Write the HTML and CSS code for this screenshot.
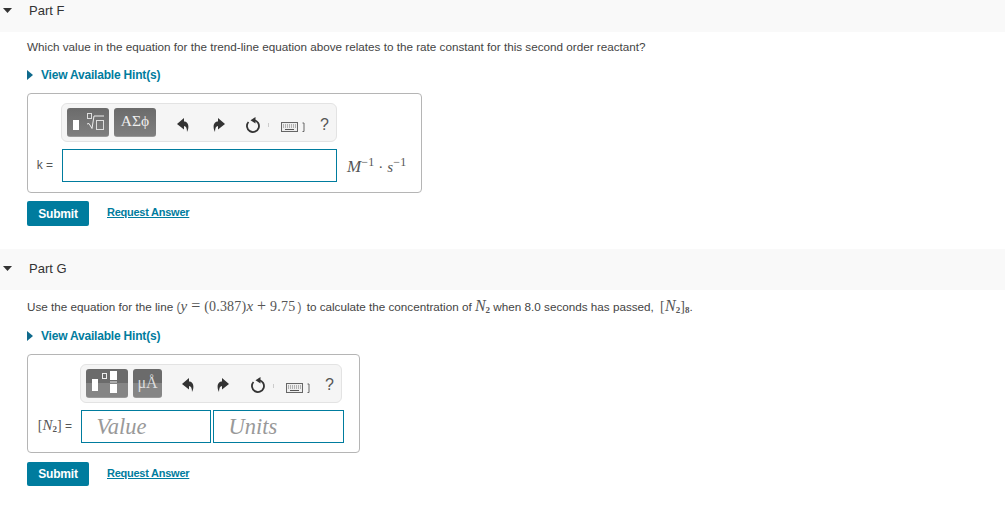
FILE: index.html
```html
<!DOCTYPE html>
<html lang="en">
<head>
<meta charset="utf-8">
<title>Part F and Part G</title>
<link rel="stylesheet" href="styles.css">
</head>
<body>
<main class="page">
  <section class="part part-f">
    <header class="part-head"><svg class="caret" width="9" height="5" viewBox="0 0 9 5"><path d="M0 0h9L4.500 5z"/></svg><h2>Part F</h2></header>
    <div class="part-body">
      <p class="question q-f">Which value in the equation for the trend-line equation above relates to the rate constant for this second order reactant?</p>
      <a class="hint"><svg width="6" height="10" viewBox="0 0 6 10"><path d="M0 0l6 5-6 5z"/></svg>View Available Hint(s)</a>
      <div class="answer answer-f">
        <div class="toolbar tb-f">
          <span class="tool tool-wide"><svg width="40" height="26" viewBox="0 0 40 26"><rect x="5" y="11" width="6" height="10" fill="#fff"/><rect x="19.500" y="4.500" width="4" height="5" fill="none" stroke="#ddd"/><path d="M19 15l2-.5 3 5 2-12.500h10" fill="none" stroke="#eee"/><rect x="28.500" y="11.500" width="7" height="9" fill="none" stroke="#ddd"/></svg></span>
          <span class="tool tool-greek">ΑΣϕ</span>
          <span class="actions">
            <svg class="a-undo" width="12" height="14" viewBox="0 0 12 14"><path d="M7 0L0 6l7 5.500V8c2 0 3 2 3 6 2-3 2.500-10.500-3-10.500z" fill="#333"/></svg>
            <svg class="a-redo" width="12" height="14" viewBox="0 0 12 14"><path d="M5 0l7 6-7 5.500V8c-2 0-3 2-3 6C0 11-.5 3.500 5 3.500z" fill="#333"/></svg>
            <svg class="a-reset" width="14" height="16" viewBox="0 0 14 16"><path d="M8 3.100a6 6 0 1 1-5.500 1.900" fill="none" stroke="#333" stroke-width="1.800"/><path d="M9.500 0v6.500L4.500 3.200z" fill="#333"/></svg>
            <span class="sep"></span>
            <svg class="a-keys" width="24" height="12" viewBox="0 0 24 12"><rect x=".5" y=".5" width="16" height="9" fill="#eee" stroke="#666"/><path d="M2 3h13M2 5h13" stroke="#777" stroke-dasharray="1 1"/><path d="M4 7.500h9" stroke="#555"/><path d="M21.500 1h1.500v8.500h-1.500" fill="none" stroke="#666"/></svg>
            <span class="help">?</span>
          </span>
        </div>
        <div class="entry">
          <label class="lbl lbl-k">k =</label>
          <input class="field field-k" type="text" aria-label="k">
          <span class="unit"><i class="unit-m">M</i><sup>−1</sup><b>·</b><i>s</i><sup>−1</sup></span>
        </div>
      </div>
      <div class="actions-row"><button class="submit">Submit</button><a class="request">Request Answer</a></div>
    </div>
  </section>

  <section class="part part-g">
    <header class="part-head"><svg class="caret" width="9" height="5" viewBox="0 0 9 5"><path d="M0 0h9L4.500 5z"/></svg><h2>Part G</h2></header>
    <div class="part-body">
      <p class="question q-g">Use the equation for the line <span class="paren">(</span><span class="math"><i class="var">y</i><span class="op">=</span><span class="num">(0.387)</span><i class="var">x</i><span class="op">+</span><span class="num">9.75</span></span><span class="paren paren-end">)</span> to calculate the concentration of <span class="math"><i class="big">N</i><span class="sub">2</span></span> when 8.0 seconds has passed, <span class="math math-last"><span class="num">[</span><i class="big">N</i><span class="sub">2</span><span class="num">]</span><span class="sub">8</span></span>.</p>
      <a class="hint"><svg width="6" height="10" viewBox="0 0 6 10"><path d="M0 0l6 5-6 5z"/></svg>View Available Hint(s)</a>
      <div class="answer answer-g">
        <div class="toolbar tb-g">
          <span class="tool tool-wide tool-split"><svg width="40" height="28" viewBox="0 0 40 28"><rect x="5" y="10" width="6" height="12" fill="#fff"/><rect x="15.500" y="4.500" width="4" height="5" fill="none" stroke="#eee"/><rect x="23" y="2" width="7" height="9" fill="#fff"/><path d="M23 13h7" stroke="#eee"/><rect x="23" y="15" width="7" height="9" fill="#fff"/></svg></span>
          <span class="tool tool-unit tool-split">μÅ</span>
          <span class="actions">
            <svg class="a-undo" width="12" height="14" viewBox="0 0 12 14"><path d="M7 0L0 6l7 5.500V8c2 0 3 2 3 6 2-3 2.500-10.500-3-10.500z" fill="#333"/></svg>
            <svg class="a-redo" width="12" height="14" viewBox="0 0 12 14"><path d="M5 0l7 6-7 5.500V8c-2 0-3 2-3 6C0 11-.5 3.500 5 3.500z" fill="#333"/></svg>
            <svg class="a-reset" width="14" height="16" viewBox="0 0 14 16"><path d="M8 3.100a6 6 0 1 1-5.500 1.900" fill="none" stroke="#333" stroke-width="1.800"/><path d="M9.500 0v6.500L4.500 3.200z" fill="#333"/></svg>
            <span class="sep"></span>
            <svg class="a-keys" width="24" height="12" viewBox="0 0 24 12"><rect x=".5" y=".5" width="16" height="9" fill="#eee" stroke="#666"/><path d="M2 3h13M2 5h13" stroke="#777" stroke-dasharray="1 1"/><path d="M4 7.500h9" stroke="#555"/><path d="M21.500 1h1.500v8.500h-1.500" fill="none" stroke="#666"/></svg>
            <span class="help">?</span>
          </span>
        </div>
        <div class="entry">
          <label class="lbl lbl-n"><span class="math">[<i>N</i><span class="sub">2</span>]</span> =</label>
          <input class="field field-value" type="text" placeholder="Value" aria-label="Value">
          <input class="field field-units" type="text" placeholder="Units" aria-label="Units">
        </div>
      </div>
      <div class="actions-row"><button class="submit">Submit</button><a class="request">Request Answer</a></div>
    </div>
  </section>
</main>
</body>
</html>
```
FILE: styles.css
```css
* { box-sizing: border-box; }
html, body { margin: 0; padding: 0; background: #fff; }
body { height: 510px; overflow: hidden; font-family: "Liberation Sans", Arial, sans-serif; font-size: 12px; color: #333; }
.page { margin-top: -9px; }
.part-head { height: 41px; background: #f9f9f9; display: flex; align-items: center; padding-bottom: 3px; }
.part-g { margin-top: 23px; }
.caret { margin-left: 3px; fill: #333; flex: none; }
h2 { margin: 0 0 0 17px; font-size: 13px; font-weight: 400; color: #333; }
.part-body { padding-left: 27px; }
.question { margin: 0; line-height: 16px; color: #444; font-size: 11.7px; white-space: nowrap; }
.q-f { padding-top: 7px; }
.q-g { padding-top: 8px; height: 24px; }
.math { font-family: "Liberation Serif", serif; color: #555; }
.math-last { margin-left: 3px; }
.num { font-size: 14px; letter-spacing: .2px; }
.op { font-size: 16px; margin: 0 4px; }
.var { font-size: 15px; }
.big { font-size: 16px; }
.sub { font-size: 9px; font-weight: 700; vertical-align: -2px; line-height: 0; }
.paren { color: #666; font-size: 12px; }
.paren-end { margin-left: 2px; margin-right: 2px; }
.hint { display: flex; align-items: center; height: 16px; margin-top: 12px; color: #007c9e; font-weight: 700; font-size: 12px; letter-spacing: -.2px; }
.hint svg { fill: #0f6a8c; margin-right: 8px; }
.q-g + .hint { margin-top: 14px; }
.answer { border: 1px solid #b5b5b5; border-radius: 4px; margin-top: 10px; background: #fff; }
.answer-f { width: 395px; height: 100px; padding: 9px 0 0 33px; }
.answer-g { width: 333px; height: 99px; padding: 9px 0 0 52px; }
.toolbar { height: 39px; background: #f5f5f5; border: 1px solid #e3e3e3; border-radius: 6px; display: flex; align-items: center; padding-left: 5px; gap: 5px; }
.tb-f { width: 276px; }
.tb-g { width: 262px; }
.tool { height: 29px; background: linear-gradient(#6b6b6b, #7f7f7f); border-radius: 3px; border-bottom: 1px solid #999; color: #eee; display: flex; align-items: center; justify-content: center; font-family: "Liberation Serif", serif; flex: none; }
.tool-wide { width: 42px; }
.tool-greek { width: 42px; font-size: 15.5px; padding-bottom: 3px; }
.tool-unit { width: 29px; font-size: 16px; color: #ddd; padding-bottom: 1px; }
.tool-split { background: linear-gradient(#6b6b6b 50%, #858585 50%); }
.actions { display: flex; align-items: center; height: 29px; flex: 1; }
.a-undo, .a-redo, .a-reset, .help { margin-top: 5px; }
.tb-g .a-undo, .tb-g .a-redo, .tb-g .a-reset, .tb-g .help { margin-top: 3px; }
.a-undo { margin-left: 16px; }
.a-redo { margin-left: 24px; }
.a-reset { margin-left: 21px; }
.tb-g .a-undo { margin-left: 15px; }
.tb-g .a-redo { margin-left: 23px; }
.tb-g .a-reset { margin-left: 22px; }
.sep { width: 1px; height: 4px; background: #ccc; margin-left: 8px; margin-top: 5px; }
.a-keys { margin-left: 12px; margin-top: 11px; }
.help { margin-left: 15px; font-size: 16px; color: #555; }
.entry { display: flex; align-items: center; margin-top: 7px; position: relative; }
.lbl { position: absolute; right: 100%; white-space: nowrap; margin-right: 8px; padding-bottom: 2px; color: #555; font-size: 12px; }
.lbl .math { font-size: 14px; color: #555; }
.lbl .math i { font-size: 15px; }
.field { height: 33px; border: 1px solid #007c9e; border-radius: 0; background: #fff; outline: none; font-family: "Liberation Serif", serif; font-style: italic; font-size: 22.5px; padding: 0 14.5px; color: #333; }
.field::placeholder { color: #999; opacity: 1; }
.field-k { width: 275px; margin-left: 1px; }
.field-value { width: 130px; margin-left: 1px; }
.field-units { width: 131px; margin-left: 2px; }
.unit { margin-left: 10px; font-family: "Liberation Serif", serif; font-size: 15px; color: #555; white-space: nowrap; padding-top: 3px; }
.unit-m { font-size: 17px; }
.unit sup { font-size: 12px; line-height: 0; letter-spacing: .2px; }
.unit b { font-weight: 400; margin: 0 4px; }
.actions-row { display: flex; align-items: center; margin-top: 8px; }
.answer-g + .actions-row { margin-top: 9px; }
.submit { width: 62px; height: 25px; background: #007c9e; color: #fff; border: 0; border-radius: 2px; font: 700 12px "Liberation Sans", Arial, sans-serif; letter-spacing: -.2px; padding: 0; }
.answer-g + .actions-row .submit { height: 24px; }
.request { margin-left: 18px; margin-bottom: 4px; color: #007c9e; font-weight: 700; font-size: 11px; text-decoration: underline; letter-spacing: -.25px; }
.answer-g + .actions-row .request { margin-bottom: 2px; }
```
